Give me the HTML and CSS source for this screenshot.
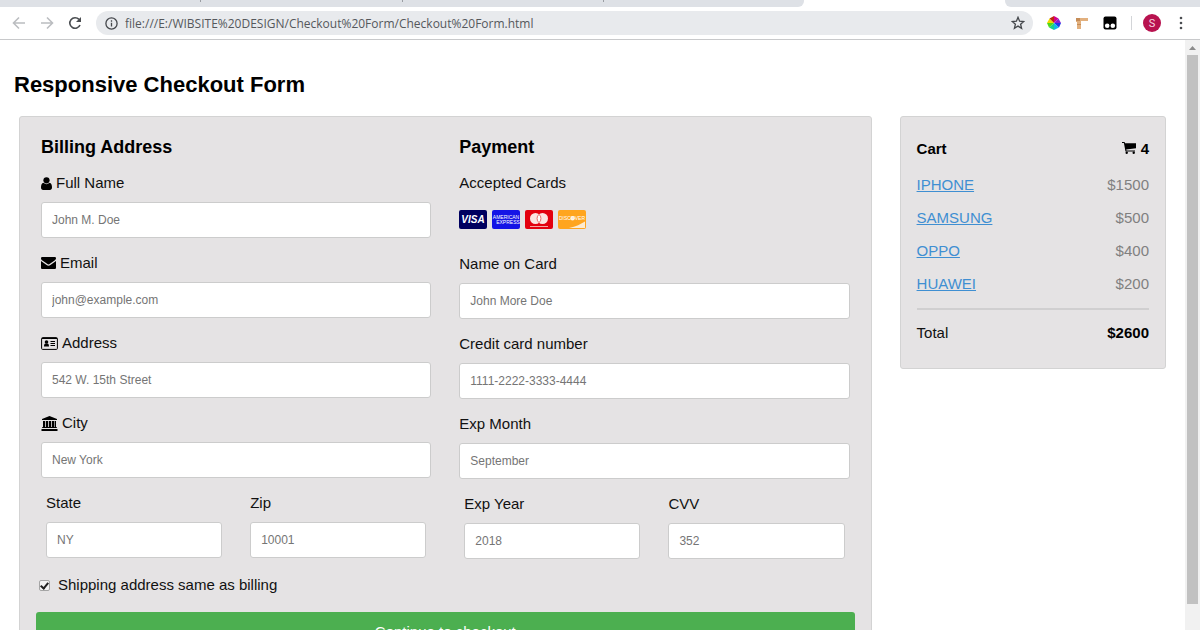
FILE: index.html
```html
<!DOCTYPE html>
<html lang="en">
<head>
  <meta charset="UTF-8">
  <meta name="viewport" content="width=device-width, initial-scale=1.0">
  <title>Checkout Form</title>
  <link rel="stylesheet" href="styles.css">
</head>
<body>
  <div class="tabstrip">
    <div class="tabs"><span></span><span></span><span></span><span></span></div>
    <div class="active-tab"></div>
    <div class="tabs-end"></div>
  </div>

  <div class="toolbar">
    <button class="nav-button disabled" aria-label="Back">
      <svg width="14" height="14" viewBox="0 0 14 14"><path d="M13 7H2M7 1.5L1.5 7L7 12.5"/></svg>
    </button>
    <button class="nav-button disabled" aria-label="Forward">
      <svg width="14" height="14" viewBox="0 0 14 14"><path d="M1 7h11M7 1.5L12.5 7L7 12.5"/></svg>
    </button>
    <button class="nav-button" aria-label="Reload">
      <svg width="14" height="14" viewBox="0 0 14 14"><path d="M12 9A5.300 5.300 0 1 1 11 3.400"/><path class="solid" d="M13 1v5H8z"/></svg>
    </button>
    <div class="address-bar">
      <svg class="info" width="13" height="13" viewBox="0 0 13 13"><circle cx="6.5" cy="6.5" r="5.6"/><path d="M6.5 5.8v3.8M6.5 3.3v1.4"/></svg>
      <input class="url" type="text" aria-label="Address" value="file:///E:/WIBSITE%20DESIGN/Checkout%20Form/Checkout%20Form.html">
      <svg class="star" width="14" height="14" viewBox="0 0 14 14"><path d="M7 1.3l1.6 3.9 4.2.3-3.2 2.7 1 4.1L7 10.1l-3.6 2.2 1-4.1L1.200 5.500l4.200-.3z"/></svg>
    </div>
    <div class="extensions">
      <svg width="14" height="14" viewBox="0 0 14 14">
        <path fill="#d4008c" d="M7 7V0l4.500 2.500z"/><path fill="#8a1fd0" d="M7 7l4.500-4.500L14 7z"/>
        <path fill="#1b39e8" d="M7 7h7l-2 4.500z"/><path fill="#11b8e8" d="M7 7l5 4.500L7 14z"/>
        <path fill="#18cf8a" d="M7 7v7l-5-2.500z"/><path fill="#4fd916" d="M7 7l-5 4.500L0 7z"/>
        <path fill="#f0d800" d="M7 7H0l2.500-4.500z"/><path fill="#c0260c" d="M7 7L2.500 2.500L7 0z"/>
      </svg>
      <svg width="14" height="14" viewBox="0 0 14 14"><path fill="#e2b07e" d="M1 2h12v3H6v8H2V6H1z"/><path fill="#c58d58" d="M1 2h4v3H1zM2 8h4v1H2z"/></svg>
      <svg width="14" height="14" viewBox="0 0 14 14"><rect x=".5" y=".5" width="13" height="13" rx="2"/><circle cx="4.200" cy="9.800" r="2.300" fill="#fff"/><circle cx="9.800" cy="9.800" r="2.300" fill="#fff"/></svg>
    </div>
    <div class="divider"></div>
    <button class="avatar" aria-label="Profile S">S</button>
    <button class="nav-button menu" aria-label="Menu">
      <svg width="4" height="14" viewBox="0 0 4 14"><circle cx="2" cy="2" r="1.300"/><circle cx="2" cy="7" r="1.300"/><circle cx="2" cy="12" r="1.300"/></svg>
    </button>
  </div>

  <div class="viewport">
    <main class="page">
      <h2>Responsive Checkout Form</h2>
      <div class="row">
        <form class="container billing">
          <div class="columns">
            <div class="col">
              <h3>Billing Address</h3>
              <label for="fname">
                <svg width="11" height="13" viewBox="0 0 11 13"><circle cx="5.500" cy="3.300" r="3.100"/><path d="M2.500 5.800C.7 6 0 8.200 0 10.300 0 12 .8 13 2.200 13h6.600c1.400 0 2.200-1 2.200-2.700 0-2.100-.7-4.300-2.500-4.500a4.300 4.300 0 0 1-6 0z"/></svg>
                Full Name</label>
              <input type="text" id="fname" placeholder="John M. Doe">
              <label for="email">
                <svg width="15" height="12" viewBox="0 0 15 12"><path d="M1.200 0h12.600C14.600 0 15 .6 15 1.300 15 2.300 14.300 3 13.600 3.500L8.900 6.800c-.4.300-.9.700-1.400.7-.5 0-1-.4-1.400-.7L1.400 3.500C.8 3.100 0 2.200 0 1.400 0 .6.400 0 1.200 0zM0 4l5.600 4c.6.500 1.200.8 1.900.8s1.300-.3 1.900-.8L15 4v6.700c0 .7-.6 1.300-1.300 1.300H1.300C.6 12 0 11.400 0 10.700z"/></svg>
                Email</label>
              <input type="text" id="email" placeholder="john@example.com">
              <label for="adr">
                <svg width="17" height="13" viewBox="0 0 17 13"><rect x=".6" y=".6" width="15.800" height="11.800" rx="1" fill="none" stroke="#000"/><path d="M1 1h15v1H1zM3 9.500c0-2 .6-3 1.500-3h2C7.400 6.500 8 7.500 8 9.500z"/><circle cx="5.500" cy="5" r="1.800"/><path d="M9.500 4H14v1H9.500zM9.500 6H14v1H9.500zM9.500 8H14v1H9.500z"/></svg>
                Address</label>
              <input type="text" id="adr" placeholder="542 W. 15th Street">
              <label for="city">
                <svg width="17" height="15" viewBox="0 0 17 15"><path d="M8.500 0L16 3v1H1V3zM2 5h2.200v6H5V5h2.200v6H8V5h2v6h.8V5H13v6h.6V5H15v6h.8v1H1.200v-1H2zM.5 13h16v2H.5z"/></svg>
                City</label>
              <input type="text" id="city" placeholder="New York">
              <div class="pair">
                <div>
                  <label for="state">State</label>
                  <input type="text" id="state" placeholder="NY">
                </div>
                <div>
                  <label for="zip">Zip</label>
                  <input type="text" id="zip" placeholder="10001">
                </div>
              </div>
            </div>

            <div class="col">
              <h3>Payment</h3>
              <p class="caption">Accepted Cards</p>
              <div class="cards">
                <svg width="28" height="19" viewBox="0 0 28 19"><rect width="28" height="19" rx="2" fill="#00005f"/><text x="14" y="13" font-size="10" font-weight="bold" font-style="italic">VISA</text></svg>
                <svg width="28" height="19" viewBox="0 0 28 19"><rect width="28" height="19" rx="2" fill="#1414e6"/><text x="14" y="9" font-size="5">AMERICAN</text><text x="16" y="14" font-size="5">EXPRESS</text></svg>
                <svg width="28" height="19" viewBox="0 0 28 19"><rect width="28" height="19" rx="2" fill="#e3000f"/><circle cx="10.500" cy="8.500" r="5.500" fill="#fbe4e2"/><circle cx="17.500" cy="8.500" r="5.500" fill="#fbe4e2"/><path d="M14 4.300a5.500 5.500 0 0 1 0 8.400a5.500 5.500 0 0 1 0-8.400z" fill="#fff" stroke="#ea6a68"/><path d="M5 16h18v1H5z" fill="#f4a5a2"/></svg>
                <svg width="28" height="19" viewBox="0 0 28 19"><rect width="28" height="19" rx="2" fill="#ffa51e"/><path d="M27 11.500V18H11c7-1.500 12-4 16-6.500z" fill="#fdebd0"/><circle cx="14.500" cy="8.300" r="2.200" fill="#fdebd0"/><text x="14" y="10" font-size="5">DISCOVER</text></svg>
              </div>
              <label for="cname">Name on Card</label>
              <input type="text" id="cname" placeholder="John More Doe">
              <label for="ccnum">Credit card number</label>
              <input type="text" id="ccnum" placeholder="1111-2222-3333-4444">
              <label for="expmonth">Exp Month</label>
              <input type="text" id="expmonth" placeholder="September">
              <div class="pair">
                <div>
                  <label for="expyear">Exp Year</label>
                  <input type="text" id="expyear" placeholder="2018">
                </div>
                <div>
                  <label for="cvv">CVV</label>
                  <input type="text" id="cvv" placeholder="352">
                </div>
              </div>
            </div>
          </div>
          <label class="same-address">
            <input type="checkbox" checked>
            Shipping address same as billing
          </label>
          <button type="submit" class="btn">Continue to checkout</button>
        </form>

        <aside class="container cart">
          <h4>Cart
            <span>
              <svg width="14" height="12" viewBox="0 0 14 12"><path d="M0 0h2.600l.4 1.300h11v5L4.200 7.500l.2 1H13v1H3.500L1.900 1H0z"/><circle cx="4.700" cy="10.800" r="1.200"/><circle cx="11.700" cy="10.800" r="1.200"/></svg>
              4
            </span>
          </h4>
          <p><a href="#">IPHONE</a> <span class="price">$1500</span></p>
          <p><a href="#">SAMSUNG</a> <span class="price">$500</span></p>
          <p><a href="#">OPPO</a> <span class="price">$400</span></p>
          <p><a href="#">HUAWEI</a> <span class="price">$200</span></p>
          <hr>
          <p>Total <b>$2600</b></p>
        </aside>
      </div>
    </main>
    <div class="scrollbar">
      <svg width="7" height="4" viewBox="0 0 7 4"><path d="M3.500 0L7 4H0z"/></svg>
      <div class="thumb"></div>
    </div>
  </div>
</body>
</html>
```

FILE: styles.css
```css
* {
  box-sizing: border-box;
}

body {
  display: flex;
  flex-direction: column;
  height: 100vh;
  margin: 0;
  overflow: hidden;
  background-color: #fff;
  color: #111;
  font-family: "Liberation Sans", Arial, sans-serif;
  font-size: 15px;
  line-height: 18px;
}

button {
  border: none;
  cursor: pointer;
}

/* Browser frame */
.tabstrip {
  display: flex;
  flex: none;
  height: 7px;
  background-color: #fff;
}

.tabs {
  display: flex;
  flex: 268;
  background-color: #dee1e6;
  border-bottom-right-radius: 6px;
}

.tabs span {
  flex: 1;
  height: 2px;
  border-right: 1px solid #9a9da2;
}

.tabs span:last-child {
  border: none;
}

.active-tab {
  flex: 67;
}

.tabs-end {
  flex: 65;
  background-color: #dee1e6;
  border-bottom-left-radius: 6px;
}

.toolbar {
  display: flex;
  flex: none;
  align-items: center;
  height: 33px;
  padding: 0 12px;
  border-bottom: 1px solid #c8c9cb;
}

.nav-button {
  display: flex;
  margin-right: 14px;
  padding: 0;
  background: none;
}

.nav-button svg {
  fill: none;
  stroke: #4a4d51;
  stroke-width: 1.6;
}

.nav-button .solid {
  fill: #4a4d51;
  stroke: none;
}

.disabled svg {
  stroke: #bbbdc0;
}

.address-bar {
  display: flex;
  flex: 1;
  align-items: center;
  height: 24px;
  margin-right: 14px;
  padding: 0 8px 0 9px;
  border-radius: 12px;
  background-color: #e8eaed;
}

.address-bar svg {
  flex: none;
  fill: none;
  stroke: #44474b;
  stroke-width: 1.3;
}

.url {
  flex: 1;
  margin: 0 7px;
  padding: 0;
  border: none;
  background: none;
  color: #55585c;
  font-family: "Open Sans", "Noto Sans", sans-serif;
  font-size: 12px;
}

.extensions {
  display: flex;
  gap: 14px;
}

.divider {
  width: 1px;
  height: 14px;
  margin: 0 11px 0 14px;
  background-color: #d3d5d8;
}

.avatar {
  width: 18px;
  height: 18px;
  padding: 0;
  border-radius: 50%;
  background-color: #b8124f;
  color: #f7d5e1;
  font-family: Roboto, sans-serif;
  font-size: 11px;
}

.menu {
  margin: 0 5px 0 18px;
}

.menu svg {
  fill: #4a4d51;
  stroke: none;
}

.viewport {
  display: flex;
  flex: 1;
  min-height: 0;
}

.scrollbar {
  display: flex;
  flex-direction: column;
  align-items: center;
  width: 15px;
  padding: 6px 2px 26px;
  background-color: #f1f1f1;
}

.scrollbar svg {
  flex: none;
  fill: #8b8b8b;
}

.thumb {
  flex: 1;
  width: 100%;
  margin-top: 5px;
  background-color: #c1c1c1;
}

/* Checkout page */
.page {
  flex: 1;
  padding: 31px 14px 0;
  overflow: hidden;
}

h2,
h3,
h4 {
  margin: 0;
  color: #000;
}

h2 {
  margin-bottom: 17px;
  font-size: 22px;
  line-height: 28px;
}

h3 {
  margin-bottom: 17px;
  font-size: 18px;
  line-height: 20px;
}

.row {
  display: grid;
  grid-template-columns: 16fr 5fr;
  gap: 28px;
  align-items: start;
  padding: 0 5px;
}

.container {
  padding: 20px 16px;
  border: 1px solid #d3d3d3;
  border-radius: 3px;
  background-color: #e5e3e4;
}

.columns,
.pair {
  display: grid;
  grid-template-columns: 1fr 1fr;
  gap: 28px;
  padding: 0 5px;
}

label {
  display: flex;
  align-items: center;
  gap: 4px;
  height: 18px;
  margin-bottom: 10px;
}

input[type="text"]::placeholder {
  color: #757575;
}

.col input {
  width: 100%;
  height: 36px;
  margin-bottom: 16px;
  padding: 0 10px;
  border: 1px solid #ccc;
  border-radius: 3px;
  background-color: #fff;
  font-family: inherit;
  font-size: 12px;
}

.caption {
  margin: 0;
}

.cards {
  display: flex;
  gap: 5px;
  margin: 18px 0 26px;
}

.cards text {
  fill: #fff;
  text-anchor: middle;
}

.same-address {
  gap: 8px;
  margin: 1px 0 18px;
}

.same-address input {
  appearance: none;
  width: 11px;
  height: 11px;
  margin: 0 0 0 3px;
  border: 1px solid #a5a5a5;
  border-radius: 2px;
  background: #f4f4f4;
}

.same-address input:checked::before {
  content: "";
  display: block;
  width: 3px;
  height: 6px;
  margin: 0 auto;
  border: solid #222;
  border-width: 0 2px 2px 0;
  box-sizing: content-box;
  transform: rotate(40deg);
}

.btn {
  width: 100%;
  height: 39px;
  border-radius: 3px;
  background-color: #4caf50;
  color: #fff;
  font-family: inherit;
  font-size: 15px;
}

.cart {
  padding: 23px 16px 26px;
}

.cart h4,
.cart p {
  display: flex;
  justify-content: space-between;
  margin: 0 0 15px;
}

.cart h4 {
  margin-bottom: 18px;
}

.cart p:last-child {
  margin: 0;
}

.cart b {
  color: #000;
}

.cart hr {
  height: 2px;
  margin: 0 0 14px;
  border: none;
  background-color: #d0cfd0;
}

a {
  color: #3f8fd2;
}

.price {
  color: #808080;
}
```
